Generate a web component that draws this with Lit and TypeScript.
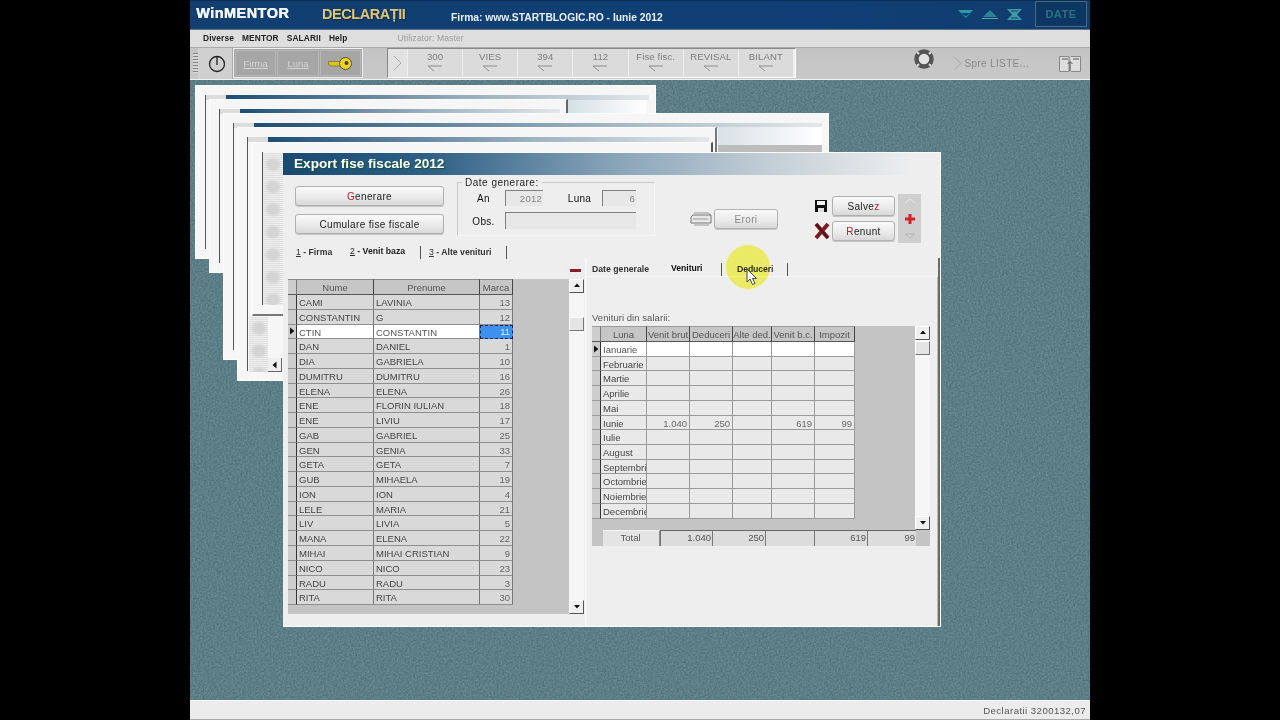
import { LitElement, html, css, svg } from "lit";
import { customElement } from "lit/decorators.js";

const PEOPLE: [string, string, string][] = [
  ["CAMI", "LAVINIA", "13"], ["CONSTANTIN", "G", "12"], ["CTIN", "CONSTANTIN", "11"], ["DAN", "DANIEL", "1"],
  ["DIA", "GABRIELA", "10"], ["DUMITRU", "DUMITRU", "16"], ["ELENA", "ELENA", "26"], ["ENE", "FLORIN IULIAN", "18"],
  ["ENE", "LIVIU", "17"], ["GAB", "GABRIEL", "25"], ["GEN", "GENIA", "33"], ["GETA", "GETA", "7"],
  ["GUB", "MIHAELA", "19"], ["ION", "ION", "4"], ["LELE", "MARIA", "21"], ["LIV", "LIVIA", "5"],
  ["MANA", "ELENA", "22"], ["MIHAI", "MIHAI CRISTIAN", "9"], ["NICO", "NICO", "23"], ["RADU", "RADU", "3"], ["RITA", "RITA", "30"],
];
const MONTHS = ["Ianuarie", "Februarie", "Martie", "Aprilie", "Mai", "Iunie", "Iulie", "August", "Septembrie", "Octombrie", "Noiembrie", "Decembrie"];
const TOOLS = ["300", "VIES", "394", "112", "Fise fisc.", "REVISAL", "BILANT"];

const tri = (dir: "up" | "down" | "left" | "right") => {
  const p = { up: "M1 5L4 1.5L7 5Z", down: "M1 2L7 2L4 5.5Z", left: "M5.5 0.5V7.5L1.5 4Z", right: "M2 0.5V7.5L6.5 4Z" }[dir];
  return html`<svg class="tri" width="8" height="8" viewBox="0 0 8 8"><path d=${p} fill="#111"></path></svg>`;
};

const toolArrow = html`<svg class="tarrow" width="16" height="7" viewBox="0 0 16 7"><path d="M1 1H15M1 1L7 6" stroke="#8d8d8d" fill="none"></path></svg>`;

const chevron = (h: number) => html`<svg width="9" height=${h} viewBox="0 0 9 16"><path d="M1 1L8 8L1 15" stroke="#a8a8a8" fill="none"></path></svg>`;

@customElement("app-root")
export class AppRoot extends LitElement {
  static styles = css`
    :host { display: block; width: 1280px; height: 720px; background: #000; font-family: "Liberation Sans", Arial, sans-serif; overflow: hidden; }
    .app { width: 900px; height: 720px; margin: 0 auto; display: flex; flex-direction: column; background: #ddd; }
    svg { display: block; flex: none; }

    .head { height: 30px; flex: none; box-sizing: border-box; display: flex; background: linear-gradient(90deg, #123f70, #0f3f76 70%, #123c6c); border-top: 1px solid #0c2c50; border-bottom: 1px solid #5d7388; color: #fff; padding-left: 6px; }
    .logo { width: 126px; font: bold 14.5px "Liberation Sans", sans-serif; letter-spacing: .45px; padding-top: 4px; color: #f2f4f6; text-shadow: .5px 0 0 #f2f4f6; }
    .decl { width: 129px; font: bold 14.5px "Liberation Sans", sans-serif; color: #dcc67c; padding-top: 5px; letter-spacing: -.45px; text-shadow: 1px 1px 1px #1b2b3a; }
    .firma { font-size: 10.3px; font-weight: bold; padding-top: 11px; color: #e8eef4; white-space: nowrap; }
    .head-icons { margin-left: auto; display: flex; align-items: center; gap: 9px; padding-right: 3px; height: 26px; }
    .date { width: 52px; height: 26px; box-sizing: border-box; margin-left: 4px; border: 1px solid #49697f; background: #0d3763; color: #2f6f86; font-size: 11px; font-weight: bold; display: flex; align-items: center; justify-content: center; letter-spacing: .5px; }

    .menu { height: 17px; flex: none; display: flex; align-items: center; gap: 8px; padding: 0 0 1px 13px; box-sizing: border-box; font-size: 8.4px; font-weight: bold; color: #222; letter-spacing: .1px; background: #dedede; }
    .user { margin-left: 42px; color: #9a9a9a; font-weight: normal; font-size: 8.6px; }

    .tools { height: 33px; flex: none; box-sizing: border-box; display: flex; align-items: flex-start; background: linear-gradient(#c3c3c3, #c9c9c9); border-top: 1px solid #a9a9a9; border-bottom: 1px solid #f2f2f2; padding-left: 3px; }
    .grip { width: 5px; height: 20px; margin-top: 5px; background: repeating-linear-gradient(#666 0 1px, #ddd 1px 3px); opacity: .7; }
    .power { width: 35px; height: 31px; display: flex; align-items: center; justify-content: center; border-right: 1px solid #aaa; box-sizing: border-box; background: #d0d0d0; padding-left: 3px; }
    .quick { width: 130px; height: 30px; box-sizing: border-box; border: 1px solid #eee; background: #a7a7a7; display: flex; gap: 1px; padding: 1px; }
    .quick div { flex: 1; background: #a6a6a6; border: 1px solid #b7b7b7; display: flex; align-items: center; justify-content: center; font-size: 9.5px; color: #d4d4d4; text-decoration: underline; }
    .list { width: 409px; height: 30px; box-sizing: border-box; margin-left: 24px; border: 1px solid #888; border-right-color: #fff; border-bottom-color: #fff; display: flex; background: #eee; padding: 0 2px 0 0; }
    .list .chev { width: 19px; background: #e2e2e2; display: flex; align-items: center; justify-content: center; }
    .list .tb { flex: 1; background: #dbdbdb; margin-left: 1px; display: flex; flex-direction: column; align-items: center; font-size: 9.6px; color: #7d7d7d; padding-top: 2px; letter-spacing: .1px; white-space: nowrap; }
    .tarrow { margin-top: 3px; }
    .right-tools { margin-left: auto; display: flex; align-items: center; height: 31px; padding-right: 9px; }
    .buoy { margin: 0 19px 10px 0; }
    .spre { font-size: 10px; color: #888; margin: 0 30px 0 2px; letter-spacing: .35px; }

    .desk { flex: 1; position: relative; overflow: hidden; background: #4f7279; }
    .noise { position: absolute; inset: 0; width: 100%; height: 100%; }

    .win { position: absolute; box-sizing: border-box; background: #f6f6f6; border: 1px solid #fbfbfb; }
    .bar { position: absolute; left: 10px; right: 6px; top: 9px; height: 5px; background: linear-gradient(90deg, #dcdcdc 0 20px, #1c4d74 20px, #9ab0bf 60%, #e3e7e9); }
    .vline { position: absolute; left: 9px; top: 9px; width: 1px; bottom: 9px; background: #555; }
    .w1 { left: 5px; top: 5px; width: 461px; height: 174px; }
    .w2 { left: 19px; top: 19px; width: 359px; height: 174px; border-right: 2px solid #666; }
    .w3 { left: 33px; top: 33px; width: 606px; height: 247px; }
    .w4 { left: 47px; top: 47px; width: 480px; height: 254px; border-right: 2px solid #777; }
    .w5 { left: 62px; top: 62px; width: 461px; height: 174px; border-bottom: 2px solid #777; border-right: 2px solid #555; }
    .tail1 { position: absolute; left: 372px; width: 78px; top: 14px; height: 20px; background: linear-gradient(90deg, #d5e0e6, #fff); }
    .tail3 { position: absolute; left: 494px; width: 104px; top: 13px; height: 18px; background: linear-gradient(90deg, #d9e2e6, #fff); }
    .tail3g { position: absolute; left: 494px; width: 104px; top: 31px; height: 8px; background: #bcbcbc; }
    .stripe { position: absolute; background-color: #e6e6e6;
      background-image: radial-gradient(ellipse 9px 8px at center, #d4d4d4 55%, transparent), repeating-linear-gradient(#dfdfdf 0 1px, #eee 1px 2px);
      background-size: 20px 22.6px, auto; }
    .s5 { left: 10px; top: 10px; width: 20px; bottom: 9px; }
    .s4 { left: 11px; top: 189px; width: 19px; height: 55px; }
    .mini { position: absolute; left: 30px; top: 230px; width: 14px; height: 14px; background: #efefef; border-right: 1px solid #666; border-bottom: 1px solid #666; display: flex; align-items: center; justify-content: center; box-sizing: border-box; }

    .main { position: absolute; left: 93px; top: 72px; width: 658px; height: 475px; box-sizing: border-box; background: #eeeeee; border: 1px solid #fafafa; border-left: none; display: flex; flex-direction: column; }
    .mtitle { height: 22px; flex: none; background: linear-gradient(90deg, #1a4a72, #2e5f84 22%, #87a3b8 50%, #c5d0d7 75%, #eeeeee 96%); color: #fff; font-size: 13.6px; font-weight: bold; padding: 3px 0 0 11px; box-sizing: border-box; text-shadow: 1px 1px 1px #153; }
    .top { height: 68px; flex: none; display: flex; padding-left: 12px; }
    .btns { width: 149px; padding-top: 11px; display: flex; flex-direction: column; gap: 8px; }
    .btn { height: 20px; box-sizing: border-box; border: 1px solid #b0b0b0; border-radius: 3px; background: linear-gradient(#fafafa, #e9e9e9 60%, #d8d8d8); box-shadow: 0 1px 0 #c6c6c6; display: flex; align-items: center; justify-content: center; font-size: 10px; color: #222; letter-spacing: .35px; }
    .btn u { color: #b02030; text-decoration: none; }
    .group { position: relative; margin: 7px 0 0 13px; width: 198px; height: 54px; box-sizing: border-box; border: 1px solid #dcdcdc; border-top-color: #c8c8c8; border-left-color: #c8c8c8; border-right-color: #f6f6f6; border-bottom-color: #f6f6f6; }
    .legend { position: absolute; left: 4px; top: -6px; background: #eee; padding: 0 3px; font-size: 10px; letter-spacing: .5px; color: #222; line-height: 11px; }
    .grow { position: absolute; left: 0; right: 0; display: flex; align-items: center; }
    .grow.a { top: 7px; } .grow.b { top: 29px; }
    .lbl { font-size: 10px; color: #111; letter-spacing: .3px; width: 47px; text-align: center; box-sizing: border-box; padding-left: 4px; }
    .grow.b .lbl { padding-top: 2px; }
    .lbl.l2 { width: 59px; padding-left: 14px; }
    .field { height: 16px; box-sizing: border-box; border-top: 1px solid #808080; border-left: 1px solid #808080; background: #e7e7e7; color: #888; font-size: 9.6px; text-align: right; padding: 0 1px; line-height: 15px; letter-spacing: .2px; }
    .f1 { width: 38px; } .f2 { width: 34px; } .f3 { width: 131px; height: 17px; }
    .erori { margin: 34px 0 0 35px; display: flex; align-items: center; gap: 2px; height: 20px; }
    .erori .btn { width: 64px; color: #8a8a8a; font-size: 10px; }
    .act { margin: 21px 0 0 36px; display: flex; flex-direction: column; gap: 5px; }
    .act > div { display: flex; align-items: center; height: 20px; width: 81px; justify-content: space-between; }
    .act .btn { width: 63px; }
    .side { width: 23px; height: 49px; margin: 19px 0 0 3px; background: #cfcfcf; display: flex; flex-direction: column; align-items: center; justify-content: space-between; padding: 4px 0; box-sizing: border-box; }

    .content { flex: 1; display: flex; min-height: 0; }
    .lpane { width: 302px; flex: none; display: flex; flex-direction: column; }
    .tabs { height: 18px; flex: none; display: flex; align-items: center; font-size: 8.7px; font-weight: bold; color: #333; white-space: nowrap; }
    .tabs.l { padding-left: 13px; }
    .tabs u { font-weight: normal; }
    .tabs .sep { width: 1px; height: 13px; background: #555; }
    .t1 { width: 54px; } .t2 { width: 70px; padding-bottom: 2px; color: #222; } .t3 { width: 85px; padding-left: 8px; box-sizing: border-box; }
    .dash { height: 18px; flex: none; position: relative; }
    .dash i { position: absolute; left: 287px; top: 8px; width: 11px; height: 3px; background: #8a1c2c; }
    .lgrid { margin-left: 5px; width: 296px; height: 335px; flex: none; background: #c4c4c4; display: flex; justify-content: space-between; }
    .tbl { display: grid; align-content: start; font-size: 9.5px; color: #444; }
    .tbl.left { grid-template-columns: 9px 77px 106px 33px; grid-template-rows: 16px; grid-auto-rows: 14.775px; }
    .tbl.rt { grid-template-columns: 9px 46px 43px 43px 39px 43px 40px; grid-template-rows: 16px; grid-auto-rows: 14.73px; }
    .c { box-sizing: border-box; overflow: hidden; white-space: nowrap; padding: 1px 1px 0 2px; line-height: 13.5px; border-right: 1px solid #777; border-bottom: 1px solid #8f8f8f; background: #d9d9d9; }
    .rt .c { background: #e9e9e9; border-color: #9a9a9a; }
    .hd { background: #c6c6c6 !important; text-align: center; border-bottom: 1px solid #555 !important; border-right: 1px solid #444 !important; border-top: 1px solid #888; line-height: 15px; padding: 0; color: #555; }
    .ind { background: #cdcdcd !important; padding: 0; border-right: 1px solid #333 !important; display: flex; align-items: center; justify-content: center; }
    .hd.ind { border-right-color: #777 !important; }
    .num { text-align: right; padding-right: 2px; color: #666; }
    .sel { background: #fff !important; color: #555; }
    .hit { background: #3d90ee !important; color: #dcebfb; border: 1px dashed #224 !important; line-height: 12px; padding-top: 0; }
    .sb { width: 15px; flex: none; background: #f6f6f6; display: flex; flex-direction: column; }
    .sbb { height: 14px; flex: none; box-sizing: border-box; background: #efefef; border: 1px solid #fff; border-right-color: #555; border-bottom-color: #555; display: flex; align-items: center; justify-content: center; }
    .sbt { height: 14px; flex: none; box-sizing: border-box; background: #e4e4e4; border: 1px solid #fff; border-right-color: #777; border-bottom-color: #777; }
    .sp { flex: 1; }
    .sb.lsb .sbt { margin-top: 24px; }

    .rpane { flex: 1; position: relative; margin-top: 15px; border-left: 2px solid #f6f6f6; border-right: 2px solid #6b6b6b; display: flex; flex-direction: column; }
    .tabs.r { padding: 4px 0 0 5px; height: 18px; box-sizing: border-box; }
    .r1 { width: 79px; } .r2 { width: 50px; padding-bottom: 2px; color: #111; letter-spacing: -.05px; } .r3 { width: 65px; padding-left: 15px; box-sizing: border-box; letter-spacing: -.1px; }
    .panel { flex: 1; border-top: 1px solid #f8f8f8; border-right: 1px solid #bbb; padding: 35px 6px 0 5px; }
    .vds { font-size: 9.5px; color: #555; height: 14px; line-height: 11px; letter-spacing: .05px; }
    .rgrid { width: 338px; background: #c4c4c4; display: flex; flex-direction: column; }
    .rtop { height: 204px; display: flex; justify-content: space-between; }
    .rt-sb { height: 204px; }
    .rt-sb .sbt { margin-top: 1px; }
    .total { height: 16px; display: flex; font-size: 9.5px; color: #555; padding-left: 11px; }
    .total div { box-sizing: border-box; height: 16px; line-height: 14px; text-align: right; padding-right: 1px; background: #dcdcdc; border-top: 1px solid #666; border-left: 1px solid #777; }
    .total .tl { width: 57px; text-align: center; background: #e4e4e4; border: none; border-right: 1px solid #888; border-top: 1px solid #f4f4f4; }
    .statusbar { height: 20px; flex: none; box-sizing: border-box; background: #ececec; border-top: 1px solid #fff; padding: 1px 4px 0 2px; display: flex; align-items: center; justify-content: flex-end; font-size: 9.6px; color: #555; letter-spacing: .45px; border-bottom: 1px solid #aaa; }

    .hl { position: absolute; left: 443px; top: 92px; width: 44px; height: 44px; border-radius: 50%; background: #fbfb6e; mix-blend-mode: multiply; }
    .cur { position: absolute; left: 463px; top: 115px; }
  `;

  private noise() {
    return svg`<svg class="noise" xmlns="http://www.w3.org/2000/svg">
      <filter id="n" x="0" y="0" width="100%" height="100%">
        <feTurbulence type="fractalNoise" baseFrequency="0.55" numOctaves="2" seed="4"></feTurbulence>
        <feColorMatrix values="0 0 0 0 .22  0 0 0 0 .38  0 0 0 0 .42  0.9 0 0 0 -.2"></feColorMatrix>
      </filter>
      <rect width="100%" height="100%" filter="url(#n)"></rect>
    </svg>`;
  }

  private sb(cls: string) {
    return html`<div class="sb ${cls}"><div class="sbb">${tri("up")}</div><div class="sbt"></div><div class="sp"></div><div class="sbb">${tri("down")}</div></div>`;
  }

  private head() {
    return html`<div class="head">
      <div class="logo">WinMENTOR</div>
      <div class="decl">DECLARAȚII</div>
      <div class="firma">Firma: www.STARTBLOGIC.RO - Iunie 2012</div>
      <div class="head-icons">
        <svg width="15" height="10" viewBox="0 0 15 10"><path d="M0 1H15L8 9Z" fill="#2c9aa8"></path><path d="M3 4H12L8 7.5Z" fill="#0f3f76"></path></svg>
        <svg width="16" height="9" viewBox="0 0 16 9"><path d="M8 0L15 7H1Z" fill="#2b8296"></path><path d="M0 8H16V9H0Z" fill="#5aa4b2"></path></svg>
        <svg width="15" height="11" viewBox="0 0 15 11"><path d="M0 0H15L10 5.5L15 11H0L5 5.5Z" fill="#3f9aa8"></path><path d="M4 2H11M4 9H11" stroke="#0f3f76"></path></svg>
        <div class="date">DATE</div>
      </div>
    </div>`;
  }

  private tools() {
    return html`<div class="tools">
      <div class="grip"></div>
      <div class="power"><svg width="18" height="18" viewBox="0 0 18 18"><circle cx="9" cy="9" r="7.5" fill="none" stroke="#222" stroke-width="1.3"></circle><path d="M9 1V10" stroke="#222" stroke-width="1.3"></path></svg></div>
      <div class="quick">
        <div>Firma</div><div>Luna</div>
        <div><svg width="24" height="13" viewBox="0 0 24 13"><path d="M0 4.5H13V9H3L1 8Z" fill="#dcc420" stroke="#6c6010" stroke-width=".6"></path><circle cx="17.5" cy="6.5" r="6" fill="#ecd430" stroke="#5c5210"></circle><circle cx="18.5" cy="6" r="2" fill="#473f10"></circle></svg></div>
      </div>
      <div class="list">
        <div class="chev">${chevron(16)}</div>
        ${TOOLS.map((t) => html`<div class="tb">${t}${toolArrow}</div>`)}
      </div>
      <div class="right-tools">
        <svg class="buoy" width="20" height="20" viewBox="0 0 20 20"><circle cx="10" cy="10" r="7.5" fill="#e4e4e4" stroke="#555" stroke-width="4.5"></circle><path d="M5 5L3 3M15 5L17 3M5 15L3 17M15 15L17 17" stroke="#ddd" stroke-width="2"></path></svg>
        ${chevron(15)}
        <div class="spre">Spre LISTE...</div>
        <svg width="22" height="16" viewBox="0 0 22 16"><path d="M.5 .5H10V15.5H.5ZM12 .5H21.5V15.5H12" fill="#ddd" stroke="#888"></path><path d="M3 3H9M14 3H20M11 15V6M8.5 8L11 5.5L13.5 8" stroke="#555" fill="none"></path></svg>
      </div>
    </div>`;
  }

  private windows() {
    return html`
      <div class="win w1"><div class="vline"></div><div class="bar"></div><div class="tail1"></div></div>
      <div class="win w2"><div class="vline"></div><div class="bar"></div></div>
      <div class="win w3"><div class="vline"></div><div class="bar"></div><div class="tail3"></div><div class="tail3g"></div></div>
      <div class="win w4"><div class="vline"></div><div class="bar"></div><div class="stripe s4"></div><div class="mini">${tri("left")}</div></div>
      <div class="win w5"><div class="vline"></div><div class="stripe s5"></div></div>`;
  }

  private leftPane() {
    return html`<div class="lpane">
      <div class="tabs l">
        <div class="t1"><u>1</u> - Firma</div>
        <div class="t2"><u>2</u> - Venit baza</div>
        <div class="sep"></div>
        <div class="t3"><u>3</u> - Alte venituri</div>
        <div class="sep"></div>
      </div>
      <div class="dash"><i></i></div>
      <div class="lgrid">
        <div class="tbl left">
          <div class="c hd ind"></div><div class="c hd">Nume</div><div class="c hd">Prenume</div><div class="c hd">Marca</div>
          ${PEOPLE.map((p, i) => {
            const s = i === 2;
            return html`<div class="c ind">${s ? tri("right") : ""}</div>
              <div class="c ${s ? "sel" : ""}">${p[0]}</div>
              <div class="c ${s ? "sel" : ""}">${p[1]}</div>
              <div class="c num ${s ? "hit" : ""}">${p[2]}</div>`;
          })}
        </div>
        ${this.sb("lsb")}
      </div>
    </div>`;
  }

  private rightPane() {
    return html`<div class="rpane">
      <div class="tabs r">
        <div class="r1">Date generale</div>
        <div class="r2">Venituri</div>
        <div class="sep"></div>
        <div class="r3">Deduceri</div>
        <div class="sep"></div>
      </div>
      <div class="panel">
        <div class="vds">Venituri din salarii:</div>
        <div class="rgrid">
          <div class="rtop">
            <div class="tbl rt">
              <div class="c hd ind"></div>
              ${["Luna", "Venit brut", "Deduceri", "Alte ded.", "Venit b.c.", "Impozit"].map((h) => html`<div class="c hd">${h}</div>`)}
              ${MONTHS.map((m, i) => {
                const s = i === 0;
                const vals = i === 5 ? ["1.040", "250", "", "619", "99"] : ["", "", "", "", ""];
                return html`<div class="c ind">${s ? tri("right") : ""}</div>
                  <div class="c ${s ? "sel" : ""}">${m}</div>
                  ${vals.map((v) => html`<div class="c num ${s ? "sel" : ""}">${v}</div>`)}`;
              })}
            </div>
            ${this.sb("rt-sb")}
          </div>
          <div class="total">
            <div class="tl">Total</div>
            <div style="width:52px">1.040</div><div style="width:53px">250</div><div style="width:49px"></div><div style="width:53px">619</div><div style="width:49px">99</div>
          </div>
        </div>
      </div>
    </div>`;
  }

  private mainWin() {
    return html`<div class="main">
      <div class="mtitle">Export fise fiscale 2012</div>
      <div class="top">
        <div class="btns">
          <div class="btn"><span><u>G</u>enerare</span></div>
          <div class="btn">Cumulare fise fiscale</div>
        </div>
        <div class="group">
          <div class="legend">Date generare:</div>
          <div class="grow a"><div class="lbl">An</div><div class="field f1">2012</div><div class="lbl l2">Luna</div><div class="field f2">6</div></div>
          <div class="grow b"><div class="lbl">Obs.</div><div class="field f3"></div></div>
        </div>
        <div class="erori">
          <svg width="22" height="14" viewBox="0 0 22 14"><path d="M3 3H21V11H1V5Z" fill="#e8e8e8" stroke="#777"></path><path d="M4 1H18L21 3M3 7H18M4 13H19" stroke="#999" fill="none"></path></svg>
          <div class="btn">Erori</div>
        </div>
        <div class="act">
          <div>
            <svg width="14" height="14" viewBox="0 0 14 14"><path d="M1 1H13V13H1Z" fill="#111"></path><path d="M3 2H11V6H3Z" fill="#f2f2f2"></path><path d="M4 9H10V13H4Z" fill="#e0e0e0"></path></svg>
            <div class="btn"><span>Salve<u>z</u></span></div>
          </div>
          <div>
            <svg width="16" height="18" viewBox="0 0 16 18"><path d="M2 2L14 16M14 2L2 16" stroke="#7c1c24" stroke-width="4"></path><path d="M2 2L14 16" stroke="#4a1016" stroke-width="1.5"></path></svg>
            <div class="btn"><span><u>R</u>enunt</span></div>
          </div>
        </div>
        <div class="side">
          <svg width="12" height="6" viewBox="0 0 12 6"><path d="M1 5L6 1L11 5" stroke="#e4e4e4" fill="none"></path></svg>
          <svg width="10" height="10" viewBox="0 0 10 10"><path d="M3.5 0H6.5V3.5H10V6.5H6.5V10H3.5V6.5H0V3.5H3.5Z" fill="#d4202c"></path></svg>
          <svg width="12" height="6" viewBox="0 0 12 6"><path d="M1 1H11L6 5Z" stroke="#b4b4b4" fill="none"></path></svg>
        </div>
      </div>
      <div class="content">
        ${this.leftPane()}
        ${this.rightPane()}
      </div>
      <div class="hl"></div>
      <svg class="cur" width="12" height="18" viewBox="0 0 12 18"><path d="M1 1V14L4 11L6.5 16.5L9 15.5L6.5 10.5H10.5Z" fill="#fff" stroke="#445" stroke-width="1"></path></svg>
    </div>`;
  }

  render() {
    return html`<div class="app">
      ${this.head()}
      <div class="menu"><span>Diverse</span><span>MENTOR</span><span>SALARII</span><span>Help</span><span class="user">Utilizator: Master</span></div>
      ${this.tools()}
      <div class="desk">
        ${this.noise()}
        ${this.windows()}
        ${this.mainWin()}
      </div>
      <div class="statusbar">Declaratii 3200132,07</div>
    </div>`;
  }
}
